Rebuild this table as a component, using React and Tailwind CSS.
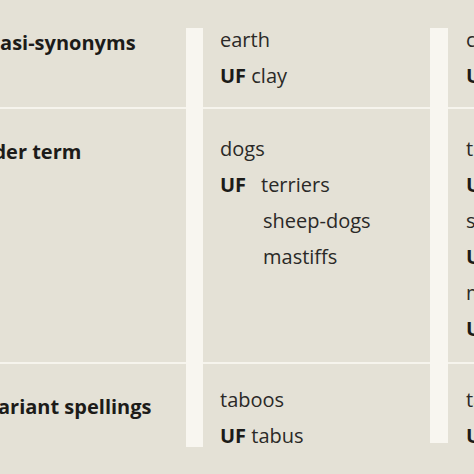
const ROW_LABELS = ["Quasi-synonyms", "Wider term", "Variant spellings"];

const Label = ({ children, className }) => (
    <div className={`${className} font-bold text-[#1c1b19] whitespace-nowrap`}>{children}</div>
);

const UF = ({ items }) => (
    <div className="flex">
        <span className="w-[41px] shrink-0 font-bold text-[#1c1b19]">UF</span>
        <div className="flex flex-col">
            {items.map((t, i) => (
                <span key={t} className={i > 0 ? "pl-[2px]" : ""}>{t}</span>
            ))}
        </div>
    </div>
);

const Use = ({ term }) => (
    <div>
        <span className="font-bold text-[#1c1b19]">USE</span> {term}
    </div>
);

const Line = () => <div className="bg-[#f6f4ed]" />;

export default function App() {
    return (
        <div className="w-[474px] h-[474px] overflow-hidden bg-[#e4e1d6] font-['Open_Sans',sans-serif] text-[20px] leading-[36px] text-[#2a2927]">
            <div className="ml-[-40px] w-[620px] h-[474px] grid grid-cols-[226px_17px_227px_18px_192px] grid-rows-[107px_2px_253px_2px_1fr]">
                {/* row 1 */}
                <Label className="pt-[25px] pl-[11px]">{ROW_LABELS[0]}</Label>
                <div className="row-span-5 mt-[28px] h-[419px] bg-[#f8f6f0]" />
                <div className="pt-[22px] pl-[17px]">
                    <div>earth</div>
                    <div>
                        <span className="font-bold text-[#1c1b19]">UF</span> clay
                    </div>
                </div>
                <div className="row-span-5 mt-[28px] h-[415px] bg-[#f8f6f0]" />
                <div className="pt-[22px] pl-[18px] whitespace-nowrap">
                    <div>clay</div>
                    <Use term="earth" />
                </div>

                {/* divider */}
                <Line />
                <Line />
                <Line />

                {/* row 2 */}
                <Label className="pt-[25px] pl-[8px]">{ROW_LABELS[1]}</Label>
                <div className="pt-[22px] pl-[17px]">
                    <div>dogs</div>
                    <UF items={["terriers", "sheep-dogs", "mastiffs"]} />
                </div>
                <div className="pt-[22px] pl-[18px] whitespace-nowrap">
                    <div>terriers</div>
                    <Use term="dogs" />
                    <div>sheep-dogs</div>
                    <Use term="dogs" />
                    <div>mastiffs</div>
                    <Use term="dogs" />
                </div>

                {/* divider */}
                <Line />
                <Line />
                <Line />

                {/* row 3 */}
                <Label className="pt-[25px] pl-[25px]">{ROW_LABELS[2]}</Label>
                <div className="pt-[18px] pl-[17px]">
                    <div>taboos</div>
                    <div>
                        <span className="font-bold text-[#1c1b19]">UF</span> tabus
                    </div>
                </div>
                <div className="pt-[18px] pl-[18px] whitespace-nowrap">
                    <div>tabus</div>
                    <Use term="taboos" />
                </div>
            </div>
        </div>
    );
}
